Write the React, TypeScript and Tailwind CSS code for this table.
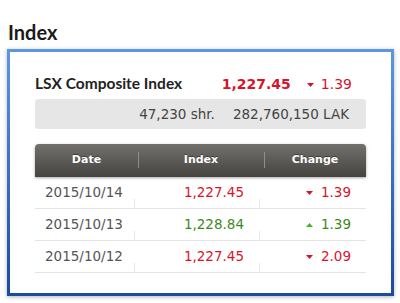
import React from 'react';

type Row = { date: string; index: string; change: string; up: boolean };

const rows: Row[] = [
  { date: '2015/10/14', index: '1,227.45', change: '1.39', up: false },
  { date: '2015/10/13', index: '1,228.84', change: '1.39', up: true },
  { date: '2015/10/12', index: '1,227.45', change: '2.09', up: false },
];

function Arrow({ up }: { up: boolean }) {
  return (
    <svg width="7" height="4" viewBox="0 0 7 4" className="shrink-0">
      {up ? (
        <polygon points="0,4 7,4 3.5,0" fill="#45b52c" />
      ) : (
        <polygon points="0,0 7,0 3.5,4" fill="#d7142a" />
      )}
    </svg>
  );
}

const dejavu = { fontFamily: '"DejaVu Sans", Verdana, sans-serif' };

export default function App() {
  return (
    <div className="w-[400px] h-[303px] bg-white overflow-hidden">
      <h1
        className="pl-[8px] pt-[22px] text-[20px] leading-none font-bold text-[#1a1a1a]"
        style={{ fontFamily: 'Lato, "Open Sans", sans-serif' }}
      >
        Index
      </h1>

      <div className="ml-[7px] mt-[7px] w-[387px] h-[247px] p-[3px] bg-gradient-to-b from-[#5b97e2] to-[#1b4b9b] shadow-[0_1px_4px_rgba(0,0,0,0.3)]">
        <div className="h-full bg-white px-[25px] pt-[20px]">
          <div className="flex items-baseline h-[20px]">
            <span
              className="text-[15.5px] font-bold text-[#222]"
              style={{ fontFamily: 'Lato, "Open Sans", sans-serif' }}
            >
              LSX Composite Index
            </span>
            <div className="ml-auto pr-[14px] flex items-center gap-[7px] text-[#d7142a]" style={dejavu}>
              <span className="text-[14px] font-bold mr-[9px]">1,227.45</span>
              <Arrow up={false} />
              <span className="text-[14px]">1.39</span>
            </div>
          </div>

          <div
            className="mt-[7px] h-[30px] rounded-[3px] bg-[#e6e6e6] flex items-center justify-end gap-[18px] pr-[17px] text-[13.5px] text-[#444]"
            style={dejavu}
          >
            <span>47,230 shr.</span>
            <span>282,760,150 LAK</span>
          </div>

          <div className="mt-[15px]" style={dejavu}>
            <div className="grid grid-cols-[103px_126px_102px] h-[33px] rounded-t-[4px] bg-gradient-to-b from-[#72716d] to-[#454440] shadow-[0_1px_3px_rgba(0,0,0,0.35)] text-[11px] font-bold text-white">
              <div className="flex items-center justify-center [text-shadow:0_-1px_0_rgba(0,0,0,0.4)]">Date</div>
              <div className="relative flex items-center justify-center [text-shadow:0_-1px_0_rgba(0,0,0,0.4)] before:absolute before:left-0 before:top-[8px] before:h-[16px] before:w-px before:bg-[#8f8e8a] before:content-['']">
                Index
              </div>
              <div className="relative flex items-center justify-center [text-shadow:0_-1px_0_rgba(0,0,0,0.4)] before:absolute before:left-0 before:top-[8px] before:h-[16px] before:w-px before:bg-[#8f8e8a] before:content-['']">
                Change
              </div>
            </div>

            {rows.map((row) => (
              <div
                key={row.date}
                className="relative grid grid-cols-[103px_126px_102px] h-[32px] border-b border-[#e4e4e4] text-[13.5px]"
              >
                <div className="flex items-center pl-[10px] text-[#555]">{row.date}</div>
                <div className={`flex items-center justify-end pr-[20px] ${row.up ? 'text-[#3c8a1e]' : 'text-[#d7142a]'}`}>
                  {row.index}
                </div>
                <div className={`flex items-center justify-end gap-[8px] pr-[15px] ${row.up ? 'text-[#3c8a1e]' : 'text-[#d7142a]'}`}>
                  <Arrow up={row.up} />
                  <span>{row.change}</span>
                </div>
                <span className="absolute left-[99px] bottom-0 h-[9px] w-px bg-[#e8e8e8]" />
                <span className="absolute left-[224px] bottom-0 h-[9px] w-px bg-[#e8e8e8]" />
              </div>
            ))}
          </div>
        </div>
      </div>
    </div>
  );
}
